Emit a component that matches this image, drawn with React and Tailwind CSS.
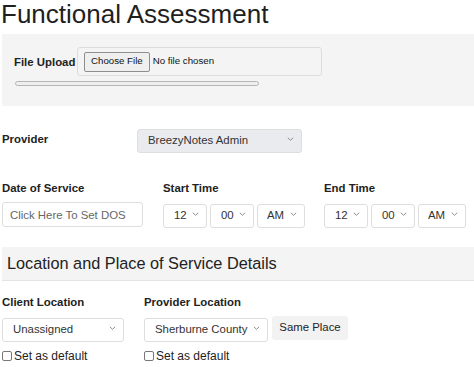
import React from "react";

const Chevron = () => (
  <svg
    className="pointer-events-none absolute right-[8px] top-1/2 -translate-y-1/2"
    width="7"
    height="5"
    viewBox="0 0 7 5"
    fill="none"
  >
    <path d="M0.8 1.2 L3.5 3.8 L6.2 1.2" stroke="#8a8a8a" strokeWidth="1" />
  </svg>
);

const Select = ({ value, width, pad = "pl-[10px]", bg = "bg-white" }) => (
  <div className={`relative h-[24px] ${width}`}>
    <select
      defaultValue={value}
      className={`h-full w-full appearance-none rounded-[3px] border border-[#dedede] ${bg} ${pad} text-[11.4px] text-[#333] outline-none`}
    >
      <option>{value}</option>
    </select>
    <Chevron />
  </div>
);

const Label = ({ children, className = "" }) => (
  <div className={`whitespace-nowrap text-[11.4px] font-bold leading-[14px] text-[#222] ${className}`}>
    {children}
  </div>
);

const CheckDefault = () => (
  <label className="flex items-center text-[12px] leading-[14px] text-[#222]">
    <span className="mr-[2px] inline-block h-[10px] w-[10px] rounded-[2px] border border-[#777] bg-white" />
    Set as default
  </label>
);

const TimeGroup = () => (
  <div className="flex gap-[3px]">
    <Select value="12" width="w-[44px]" />
    <Select value="00" width="w-[44px]" />
    <Select value="AM" width="w-[48px]" pad="pl-[9px]" />
  </div>
);

export default function App() {
  return (
    <div className="h-[367px] w-[474px] overflow-hidden bg-white font-['Liberation_Sans',Arial,sans-serif] text-[#222]">
      <h1 className="pl-[1px] text-[26px] leading-[29px] text-[#1f1f1f]">Functional Assessment</h1>

      <div className="ml-[2px] mt-[5px] h-[72px] bg-[#f4f4f4] pl-[12px] pt-[13px]">
        <div className="flex items-center">
          <Label className="w-[63px]">File Upload</Label>
          <div className="flex h-[29px] w-[245px] items-center rounded-[3px] border border-[#dcdcdc] pl-[6px]">
            <button className="h-[20px] rounded-[2px] border border-[#8f8f8f] bg-[#efefef] px-[6px] text-[9.7px] text-[#111]">
              Choose File
            </button>
            <span className="ml-[3px] text-[9.7px] text-[#111]">No file chosen</span>
          </div>
        </div>
        <div className="ml-[1px] mt-[5px] h-[5px] w-[244px] rounded-full border border-[#b5b5b5] bg-[#eeeeee]" />
      </div>

      <div className="ml-[2px] mt-[21px] flex items-center">
        <Label className="w-[135px]">Provider</Label>
        <Select value="BreezyNotes Admin" width="w-[165px]" bg="bg-[#e9ebee]" />
      </div>

      <div className="ml-[2px] mt-[30px] flex">
        <div className="w-[161px]">
          <Label>Date of Service</Label>
          <input
            placeholder="Click Here To Set DOS"
            className="mt-[7px] h-[25px] w-[141px] rounded-[3px] border border-[#dedede] pl-[7px] text-[11.4px] text-[#333] placeholder:text-[#666] outline-none"
          />
        </div>
        <div className="w-[161px]">
          <Label>Start Time</Label>
          <div className="mt-[7px]">
            <TimeGroup />
          </div>
        </div>
        <div>
          <Label>End Time</Label>
          <div className="mt-[7px]">
            <TimeGroup />
          </div>
        </div>
      </div>

      <div className="ml-[2px] mt-[20px] flex h-[33px] items-center bg-[#f4f4f4] pl-[5px] shadow-[0_1px_0_#e4e4e4]">
        <span className="text-[16.3px] text-[#222]">Location and Place of Service Details</span>
      </div>

      <div className="ml-[2px] mt-[15px] flex">
        <div className="w-[142px]">
          <Label>Client Location</Label>
          <div className="mt-[7px]">
            <Select value="Unassigned" width="w-[122px]" />
          </div>
          <div className="mt-[9px]">
            <CheckDefault />
          </div>
        </div>
        <div>
          <Label>Provider Location</Label>
          <div className="mt-[7px] flex items-center gap-[4px]">
            <Select value="Sherburne County" width="w-[124px]" pad="pl-[10px]" />
            <button className="h-[24px] w-[76px] rounded-[3px] bg-[#f2f2f2] text-[11.4px] text-[#222]">
              Same Place
            </button>
          </div>
          <div className="mt-[9px]">
            <CheckDefault />
          </div>
        </div>
      </div>
    </div>
  );
}
